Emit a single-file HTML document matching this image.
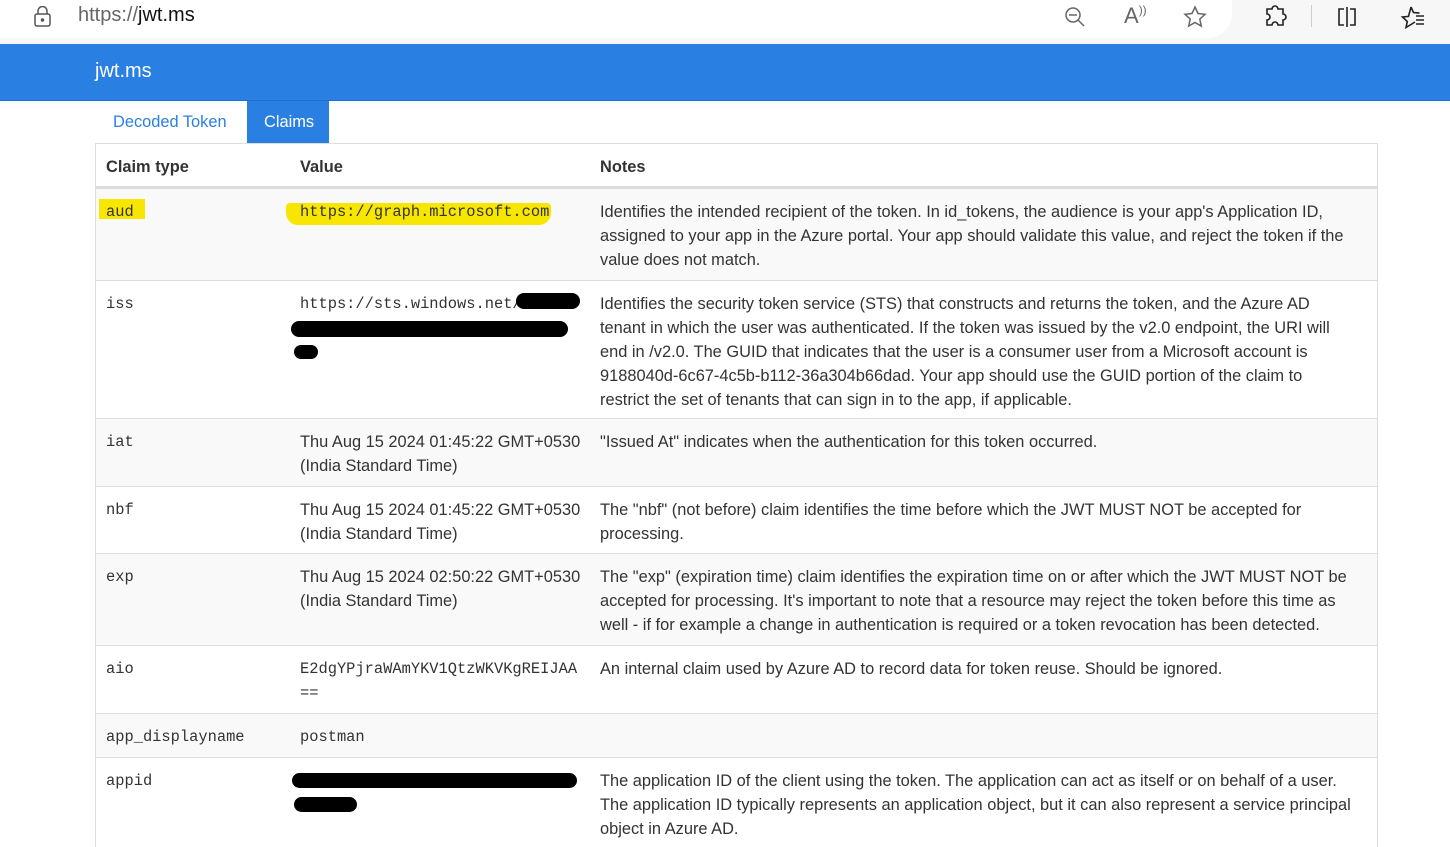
<!DOCTYPE html>
<html><head><meta charset="utf-8"><style>
*{margin:0;padding:0;box-sizing:border-box}
body{width:1450px;height:835px;overflow:hidden;background:#fff;font-family:"Liberation Sans",sans-serif;color:#333;position:relative}
.chrome{position:absolute;left:0;top:0;width:1450px;height:44px;background:#f7f7f7}
.pill{position:absolute;left:-20px;top:-8px;width:1252px;height:46px;background:#fff;border-radius:0 0 24px 0}
.url{position:absolute;left:78px;top:4px;font-size:20px;color:#666}
.url b{font-weight:normal;color:#111}
.blue{position:absolute;left:0;top:44px;width:1450px;height:57px;background:#2a80e2;border-bottom:1px solid #1f6fcc}
.brand{position:absolute;left:95px;top:16px;font-size:20px;color:#fff}
.tab{position:absolute;top:101px;height:42px;font-size:16.4px;line-height:42px;padding:0 17px}
.r{position:absolute;left:95px;width:1283px;border-left:1px solid #ddd;border-right:1px solid #ddd;border-top:1px solid #ddd}
.r.o{background:#f9f9f9}
.c{position:absolute;top:11px;font-size:16.4px;line-height:24px;white-space:nowrap}
.m{font-family:"Liberation Mono",monospace;font-size:15.4px}
.c1{left:10px}.c2{left:204px}.c3{left:504px}
.blk{position:absolute;background:#000;border-radius:12px}
.hl{position:absolute;background:#f7e600}
</style></head><body>
<div class="chrome"><div class="pill"></div>
<svg style="position:absolute;left:33px;top:6px" width="20" height="22" viewBox="0 0 20 22" fill="none" stroke="#555" stroke-width="1.5"><rect x="2" y="8" width="15" height="12" rx="2"/><path d="M5 8V5a4.5 4.5 0 0 1 9 0v3"/><circle cx="9.5" cy="14" r="1" fill="#555"/></svg>
<div class="url">https://<b>jwt.ms</b></div>
<svg style="position:absolute;left:1063px;top:5px" width="24" height="24" fill="none" stroke="#666" stroke-width="1.5"><circle cx="10" cy="10" r="7"/><path d="M6 10h8M15 15l6 6"/></svg>
<div style="position:absolute;left:1124px;top:3px;font-size:22px;color:#666">A<span style="font-size:12px;vertical-align:top">))</span></div>
<svg style="position:absolute;left:1182px;top:4px" width="26" height="26" fill="none" stroke="#666" stroke-width="1.5"><path d="M13 3l3 6.5 7 .8-5.2 4.8 1.5 7L13 18.5 6.7 22l1.5-7L3 10.3l7-.8z"/></svg>
<svg style="position:absolute;left:1263px;top:4px" width="26" height="26" fill="none" stroke="#222" stroke-width="1.6"><path d="M9 5a3 3 0 0 1 6 0h5v5a3 3 0 0 1 0 6v5h-5a3 3 0 0 0-6 0H4v-5a3 3 0 0 0 0-6V5z"/></svg>
<div style="position:absolute;left:1311px;top:5px;width:1px;height:22px;background:#ccc"></div>
<svg style="position:absolute;left:1334px;top:4px" width="26" height="26" fill="none" stroke="#222" stroke-width="1.6"><path d="M10 5H5v16h5M16 5h5v16h-5M13 3v20"/></svg>
<svg style="position:absolute;left:1400px;top:4px" width="28" height="26" fill="none" stroke="#222" stroke-width="1.6"><path d="M11 3l2.5 5.5 6 .6M15 18l-4 2.5-5 3 1.3-6L2.5 13l6-.6L11 3M16 12h8M16 16h8M16 20h8"/></svg>
</div>
<div class="blue"><div class="brand">jwt.ms</div></div>
<div class="tab" style="left:96px;color:#2a80e2">Decoded Token</div>
<div class="tab" style="left:247px;width:82px;background:#2a80e2;color:#fff">Claims</div>

<div class="r" style="top:143px;height:45px;border-bottom:2px solid #ddd"><div class="c c1" style="font-weight:bold">Claim type</div><div class="c c2" style="font-weight:bold">Value</div><div class="c c3" style="font-weight:bold">Notes</div></div>

<div class="r o" style="top:188px;height:92px">
<div class="hl" style="left:3px;top:10px;width:46px;height:20px"></div>
<div class="hl" style="left:190px;top:14px;width:265px;height:22px;border-radius:4px 4px 12px 12px"></div>
<div class="c c1 m">aud</div><div class="c c2 m">https://graph.microsoft.com</div>
<div class="c c3">Identifies the intended recipient of the token. In id_tokens, the audience is your app's Application ID,<br>assigned to your app in the Azure portal. Your app should validate this value, and reject the token if the<br>value does not match.</div></div>

<div class="r" style="top:280px;height:138px">
<div class="c c1 m">iss</div><div class="c c2 m">https://sts.windows.net/</div>
<div class="blk" style="left:420px;top:12px;width:64px;height:16px"></div>
<div class="blk" style="left:195px;top:40px;width:277px;height:16px"></div>
<div class="blk" style="left:198px;top:64px;width:24px;height:14px"></div>
<div class="c c3">Identifies the security token service (STS) that constructs and returns the token, and the Azure AD<br>tenant in which the user was authenticated. If the token was issued by the v2.0 endpoint, the URI will<br>end in /v2.0. The GUID that indicates that the user is a consumer user from a Microsoft account is<br>9188040d-6c67-4c5b-b112-36a304b66dad. Your app should use the GUID portion of the claim to<br>restrict the set of tenants that can sign in to the app, if applicable.</div></div>

<div class="r o" style="top:418px;height:68px">
<div class="c c1 m">iat</div><div class="c c2">Thu Aug 15 2024 01:45:22 GMT+0530<br>(India Standard Time)</div>
<div class="c c3">"Issued At" indicates when the authentication for this token occurred.</div></div>

<div class="r" style="top:486px;height:67px">
<div class="c c1 m">nbf</div><div class="c c2">Thu Aug 15 2024 01:45:22 GMT+0530<br>(India Standard Time)</div>
<div class="c c3">The "nbf" (not before) claim identifies the time before which the JWT MUST NOT be accepted for<br>processing.</div></div>

<div class="r o" style="top:553px;height:92px">
<div class="c c1 m">exp</div><div class="c c2">Thu Aug 15 2024 02:50:22 GMT+0530<br>(India Standard Time)</div>
<div class="c c3">The "exp" (expiration time) claim identifies the expiration time on or after which the JWT MUST NOT be<br>accepted for processing. It's important to note that a resource may reject the token before this time as<br>well - if for example a change in authentication is required or a token revocation has been detected.</div></div>

<div class="r" style="top:645px;height:68px">
<div class="c c1 m">aio</div><div class="c c2 m">E2dgYPjraWAmYKV1QtzWKVKgREIJAA<br>==</div>
<div class="c c3">An internal claim used by Azure AD to record data for token reuse. Should be ignored.</div></div>

<div class="r o" style="top:713px;height:44px">
<div class="c c1 m">app_displayname</div><div class="c c2 m">postman</div></div>

<div class="r" style="top:757px;height:90px">
<div class="c c1 m">appid</div>
<div class="blk" style="left:196px;top:15px;width:285px;height:15px"></div>
<div class="blk" style="left:198px;top:39px;width:63px;height:15px"></div>
<div class="c c3">The application ID of the client using the token. The application can act as itself or on behalf of a user.<br>The application ID typically represents an application object, but it can also represent a service principal<br>object in Azure AD.</div></div>
</body></html>
